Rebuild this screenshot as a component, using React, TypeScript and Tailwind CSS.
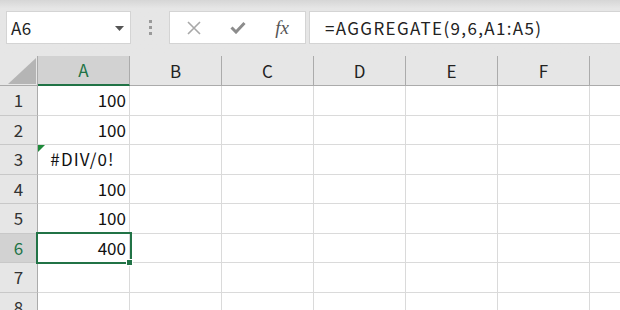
import React from "react";

const FONT = { fontFamily: '"Noto Sans CJK JP", "Noto Sans", sans-serif' };

const cols = ["A", "B", "C", "D", "E", "F", "G"];

const rows: { n: number; h: string; a: string; align: "right" | "center" }[] = [
  { n: 1, h: "h-[30px]", a: "100", align: "right" },
  { n: 2, h: "h-[29px]", a: "100", align: "right" },
  { n: 3, h: "h-[30px]", a: "#DIV/0!", align: "center" },
  { n: 4, h: "h-[29px]", a: "100", align: "right" },
  { n: 5, h: "h-[30px]", a: "100", align: "right" },
  { n: 6, h: "h-[29px]", a: "400", align: "right" },
  { n: 7, h: "h-[30px]", a: "", align: "right" },
  { n: 8, h: "h-[30px]", a: "", align: "right" },
];

export default function App() {
  return (
    <div className="w-[620px] h-[310px] overflow-hidden bg-white relative" style={FONT}>
      {/* formula bar area */}
      <div className="h-[56px] bg-[#e6e6e6] bg-gradient-to-b from-[#d6d6d6] via-[#e6e6e6] via-[15%] to-[#e6e6e6] flex items-start pt-[11px]">
        <div className="ml-[6px] w-[125px] h-[33px] bg-white border border-[#d4d4d4] flex items-center justify-between pl-[4px] pr-[6px]">
          <span className="text-[17px] text-[#222] leading-none tracking-[0.5px] -mt-[1px]">A6</span>
          <svg width="9" height="5" viewBox="0 0 9 5" className="mt-[1px]">
            <path d="M0 0 L9 0 L4.5 5 Z" fill="#555" />
          </svg>
        </div>
        <div className="w-[38px] h-[33px] flex flex-col items-center justify-center gap-[3px]">
          <div className="w-[3px] h-[3px] bg-[#9a9a9a]" />
          <div className="w-[3px] h-[3px] bg-[#9a9a9a]" />
          <div className="w-[3px] h-[3px] bg-[#9a9a9a]" />
        </div>
        <div className="w-[137px] h-[33px] bg-white border border-[#d4d4d4] flex items-center">
          <div className="w-[46px] flex justify-center pl-[3px]">
            <svg width="14" height="14" viewBox="0 0 14 14">
              <path d="M1 1 L13 13 M13 1 L1 13" stroke="#a8a8a8" strokeWidth="1.6" />
            </svg>
          </div>
          <div className="w-[44px] flex justify-center">
            <svg width="16" height="13" viewBox="0 0 16 13">
              <path d="M1.5 6.5 L6 11 L14.5 2" stroke="#8c8c8c" strokeWidth="3" fill="none" />
            </svg>
          </div>
          <div className="w-[46px] flex justify-center">
            <span className="text-[19px] italic text-[#555] leading-none" style={{ fontFamily: '"Liberation Serif", serif' }}>
              fx
            </span>
          </div>
        </div>
        <div className="ml-[3px] flex-1 h-[33px] bg-white border border-[#d4d4d4] border-r-0 flex items-center pl-[15px]">
          <span className="text-[17px] text-[#222] leading-none tracking-[1.35px] -mt-[1px]">=AGGREGATE(9,6,A1:A5)</span>
        </div>
      </div>

      {/* grid */}
      <div className="relative">
        {/* column header */}
        <div className="flex h-[30px]">
          <div className="w-[38px] shrink-0 bg-[#e6e6e6] border-r border-b border-[#ababab] relative">
            <svg width="28" height="26" viewBox="0 0 28 26" className="absolute right-[1px] bottom-[1px]">
              <path d="M28 0 L28 26 L0 26 Z" fill="#b5b5b5" />
            </svg>
          </div>
          {cols.map((c) => (
            <div
              key={c}
              className={
                c === "A"
                  ? "w-[92px] shrink-0 bg-[#d2d2d2] border-r border-[#ababab] border-b-2 border-b-[#217346] flex items-center justify-center text-[17px] text-[#217346]"
                  : "w-[92px] shrink-0 bg-[#e6e6e6] border-r border-b border-[#ababab] flex items-center justify-center text-[17px] text-[#222]"
              }
            >
              {c === "G" ? "" : c}
            </div>
          ))}
        </div>
        {rows.map((r) => (
          <div key={r.n} className={`flex ${r.h}`}>
            <div
              className={
                r.n === 6
                  ? "w-[38px] shrink-0 bg-[#d2d2d2] border-r border-b border-[#ababab] border-b-[#c8c8c8] flex items-center justify-center text-[17px] text-[#217346] pb-[1px]"
                  : "w-[38px] shrink-0 bg-[#e6e6e6] border-r border-b border-[#ababab] border-b-[#c8c8c8] flex items-center justify-center text-[17px] text-[#333] pb-[1px]"
              }
            >
              {r.n}
            </div>
            {cols.map((c) => (
              <div
                key={c}
                className={`w-[92px] shrink-0 border-r border-b border-[#dadada] flex items-center text-[17px] text-[#111] relative pb-[1px] ${
                  c === "A" && r.align === "center" ? "justify-center tracking-[1.1px] pr-[2px]" : "justify-end pr-[3px]"
                }`}
              >
                {c === "A" ? r.a : ""}
                {c === "A" && r.n === 3 ? (
                  <svg width="7" height="7" viewBox="0 0 7 7" className="absolute left-0 top-0">
                    <path d="M0 0 L7 0 L0 7 Z" fill="#1e8a3a" />
                  </svg>
                ) : null}
              </div>
            ))}
          </div>
        ))}
        {/* selection */}
        <div className="absolute left-[36px] top-[176px] w-[96px] h-[32px] border-2 border-[#217346]" />
        <div className="absolute left-[126px] top-[203px] w-[7px] h-[7px] bg-[#217346] border border-white" />
      </div>
    </div>
  );
}
